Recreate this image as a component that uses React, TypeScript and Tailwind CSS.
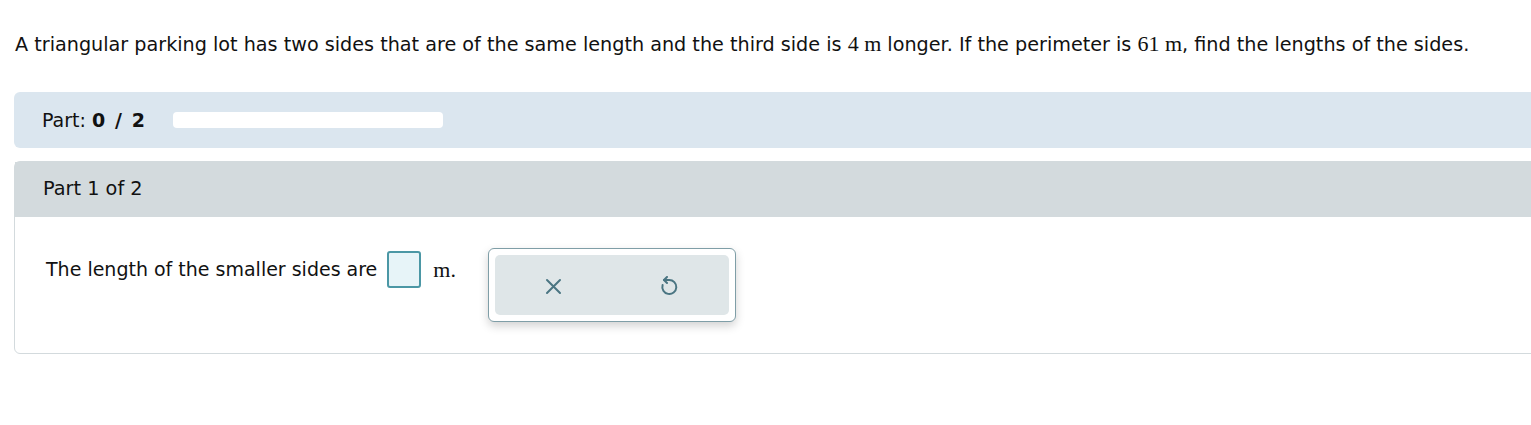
import React from 'react';

const font = { fontFamily: '"DejaVu Sans", Verdana, sans-serif' };

function MathText({ children }: { children: React.ReactNode }) {
    return <span className="font-['Liberation_Serif',serif] text-[22px]">{children}</span>;
}

export default function App() {
    return (
        <div className="min-h-screen w-full overflow-hidden bg-white text-[#111]" style={font}>
            <div className="w-[1545px] pl-[14px]">
                {/* Question */}
                <p className="pl-[1px] pt-[31px] text-[19.2px] leading-[26px]">
                    A triangular parking lot has two sides that are of the same length and the third side is <MathText>4 m</MathText> longer. If the perimeter is <MathText>61 m</MathText>, find the lengths of the sides.
                </p>

                {/* Progress */}
                <div className="mt-[34px] flex h-[56px] items-center rounded-md bg-[#dbe6ef] pl-[28px]">
                    <span className="text-[19px]">
                        Part: <b className="tracking-[1.6px]">0 / 2</b>
                    </span>
                    <div className="ml-[26px] h-[16px] w-[270px] rounded bg-white" />
                </div>

                {/* Part 1 */}
                <div className="mt-[13px] rounded-md border border-[#d3dadd]">
                    <div className="flex h-[55px] items-center bg-[#d3dadd] pl-[28px] text-[19.3px]">Part 1 of 2</div>
                    <div className="flex h-[136px] items-start pl-[31px] pt-[31px]">
                        <div className="flex items-center gap-[10px] pt-[3px] text-[19px]">
                            <span>The length of the smaller sides are</span>
                            <div className="h-[37px] w-[34px] rounded-[3px] border-2 border-[#4b97a5] bg-[#e7f4f8]" />
                            <span className="ml-[2px] font-['Liberation_Serif',serif] text-[22px]">m.</span>
                        </div>
                        <div className="ml-[32px] rounded-md border border-[#7f9ea7] bg-white p-[6px] shadow-[0_4px_10px_rgba(0,0,0,0.18)]">
                            <div className="flex h-[60px] w-[234px] items-center rounded-[5px] bg-[#dfe6e8]">
                                <div className="flex w-1/2 justify-center pt-[2px]">
                                    <svg width="17" height="17" viewBox="0 0 17 17" fill="none" stroke="#4a7582" strokeWidth="2" strokeLinecap="round">
                                        <path d="M2 2 L15 15 M15 2 L2 15" />
                                    </svg>
                                </div>
                                <div className="flex w-1/2 justify-center pr-[2px] pt-[2px]">
                                    <svg width="18" height="21" viewBox="0 0 18 21" fill="none" stroke="#4a7582" strokeWidth="2" strokeLinecap="round" strokeLinejoin="round">
                                        <path d="M7 1 L4 4 L7 7" />
                                        <path d="M4 4 H9 A7 7 0 1 1 2.6 9" />
                                    </svg>
                                </div>
                            </div>
                        </div>
                    </div>
                </div>
            </div>
        </div>
    );
}
